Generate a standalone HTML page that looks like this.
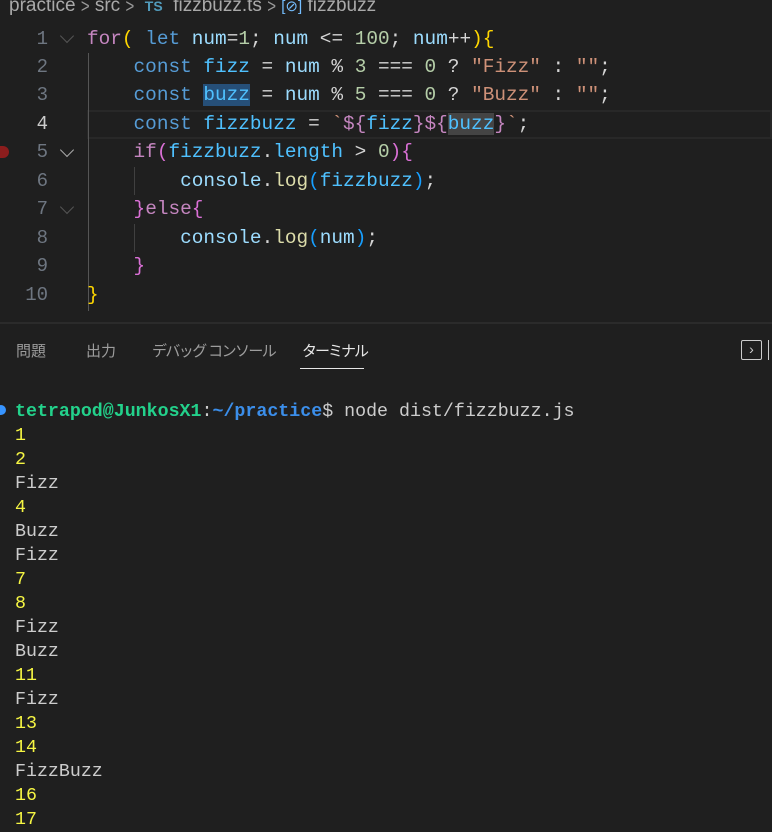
<!DOCTYPE html>
<html><head><meta charset="utf-8"><style>
*{margin:0;padding:0;box-sizing:border-box}
body{width:772px;height:826px;background:#1f1f1f;overflow:hidden;position:relative;font-family:"Liberation Mono",monospace;}
.bc{position:absolute;top:-5px;left:9px;font:19px "Liberation Sans",sans-serif;color:#a9a9a9;white-space:pre}
.ln{position:absolute;left:0;width:48px;text-align:right;color:#6e7681;font-size:19px;line-height:28px}
.code{position:absolute;left:87px;font-size:19.4px;line-height:28px;white-space:pre;color:#d4d4d4}
.k{color:#c586c0}.b{color:#569cd6}.v{color:#9cdcfe}.c{color:#4fc1ff}.n{color:#b5cea8}.s{color:#ce9178}.f{color:#dcdcaa}
.y{color:#ffd700}.p{color:#da70d6}.bl{color:#179fff}
.chev{position:absolute;left:62px;width:10px;height:10px;border-right:1.5px solid #aaa;border-bottom:1.5px solid #aaa;transform:rotate(45deg)}
.guide{position:absolute;width:1px;background:#404040}
.term{position:absolute;left:15px;top:400px;font-size:18.3px;line-height:24px;white-space:pre;color:#cccccc}
.t-y{color:#f5f543}
.tab{position:absolute;top:340px;font:15px "Liberation Sans","Noto Sans CJK JP",sans-serif;color:#9d9d9d;white-space:pre}
.sep{font-size:15px;color:#999;display:inline-block;transform:scaleY(1.3)}
</style></head><body>
<div class="bc">practice <span class="sep">&gt;</span> src <span class="sep">&gt;</span>  <span style="color:#519aba;font-size:14px;font-weight:bold">TS</span>  fizzbuzz.ts <span class="sep">&gt;</span> <span style="color:#75beff;font-size:15px">[⊘]</span> fizzbuzz</div>

<div style="position:absolute;left:87px;top:110px;width:685px;height:29px;border:2px solid #282828"></div>
<div style="position:absolute;left:0;top:146px;width:9px;height:12px;border-radius:0 6px 6px 0;background:#8c1d1d"></div>

<div class="ln" style="top:25px">1</div>
<div class="ln" style="top:53px">2</div>
<div class="ln" style="top:81px">3</div>
<div class="ln" style="top:110px;color:#cccccc">4</div>
<div class="ln" style="top:138px">5</div>
<div class="ln" style="top:167px">6</div>
<div class="ln" style="top:195px">7</div>
<div class="ln" style="top:224px">8</div>
<div class="ln" style="top:252px">9</div>
<div class="ln" style="top:281px">10</div>
<div class="chev" style="top:31px;border-color:#555"></div>
<div class="chev" style="top:145px"></div>
<div class="chev" style="top:202px;border-color:#555"></div>

<div class="guide" style="left:88px;top:53px;height:258px;background:#555"></div>
<div class="guide" style="left:134px;top:167px;height:28px"></div>
<div class="guide" style="left:134px;top:224px;height:28px"></div>

<div class="code" style="top:25px"><span class="k">for</span><span class="y">(</span> <span class="b">let</span> <span class="v">num</span>=<span class="n">1</span>; <span class="v">num</span> &lt;= <span class="n">100</span>; <span class="v">num</span>++<span class="y">){</span></div>
<div class="code" style="top:53px">    <span class="b">const</span> <span class="c">fizz</span> = <span class="v">num</span> % <span class="n">3</span> === <span class="n">0</span> ? <span class="s">"Fizz"</span> : <span class="s">""</span>;</div>
<div class="code" style="top:81px">    <span class="b">const</span> <span class="c" style="background:#264f78">buzz</span> = <span class="v">num</span> % <span class="n">5</span> === <span class="n">0</span> ? <span class="s">"Buzz"</span> : <span class="s">""</span>;</div>
<div class="code" style="top:110px">    <span class="b">const</span> <span class="c">fizzbuzz</span> = <span class="s">`</span><span class="k">${</span><span class="c">fizz</span><span class="k">}${</span><span class="c" style="background:#444">buzz</span><span class="k">}</span><span class="s">`</span>;</div>
<div class="code" style="top:138px">    <span class="k">if</span><span class="p">(</span><span class="c">fizzbuzz</span>.<span class="c">length</span> &gt; <span class="n">0</span><span class="p">){</span></div>
<div class="code" style="top:167px">        <span class="v">console</span>.<span class="f">log</span><span class="bl">(</span><span class="c">fizzbuzz</span><span class="bl">)</span>;</div>
<div class="code" style="top:195px">    <span class="p">}</span><span class="k">else</span><span class="p">{</span></div>
<div class="code" style="top:224px">        <span class="v">console</span>.<span class="f">log</span><span class="bl">(</span><span class="v">num</span><span class="bl">)</span>;</div>
<div class="code" style="top:252px">    <span class="p">}</span></div>
<div class="code" style="top:281px"><span class="y">}</span></div>

<div style="position:absolute;left:0;top:322px;width:772px;height:2px;background:#2b2b2b"></div>
<div class="tab" style="left:16px">問題</div>
<div class="tab" style="left:86px">出力</div>
<div class="tab" style="left:152px;letter-spacing:-1.6px">デバッグ コンソール</div>
<div class="tab" style="left:302px;color:#e7e7e7;letter-spacing:-2px">ターミナル</div>
<div style="position:absolute;left:300px;top:368px;width:64px;height:1px;background:#e7e7e7"></div>
<div style="position:absolute;left:741px;top:340px;width:21px;height:20px;border:1.5px solid #ccc;border-radius:2px;color:#ccc;font:14px sans-serif;text-align:center;line-height:17px">›</div>
<div style="position:absolute;left:768px;top:340px;width:4px;height:20px;border-left:1.5px solid #ccc"></div>

<div style="position:absolute;left:-4px;top:405px;width:10px;height:10px;border-radius:50%;background:#3794ff"></div>
<div class="term"><span style="color:#23d18b;font-weight:bold">tetrapod@JunkosX1</span>:<span style="color:#3b8eea;font-weight:bold">~/practice</span>$ node dist/fizzbuzz.js
<span class="t-y">1</span>
<span class="t-y">2</span>
Fizz
<span class="t-y">4</span>
Buzz
Fizz
<span class="t-y">7</span>
<span class="t-y">8</span>
Fizz
Buzz
<span class="t-y">11</span>
Fizz
<span class="t-y">13</span>
<span class="t-y">14</span>
FizzBuzz
<span class="t-y">16</span>
<span class="t-y">17</span></div>
</body></html>
